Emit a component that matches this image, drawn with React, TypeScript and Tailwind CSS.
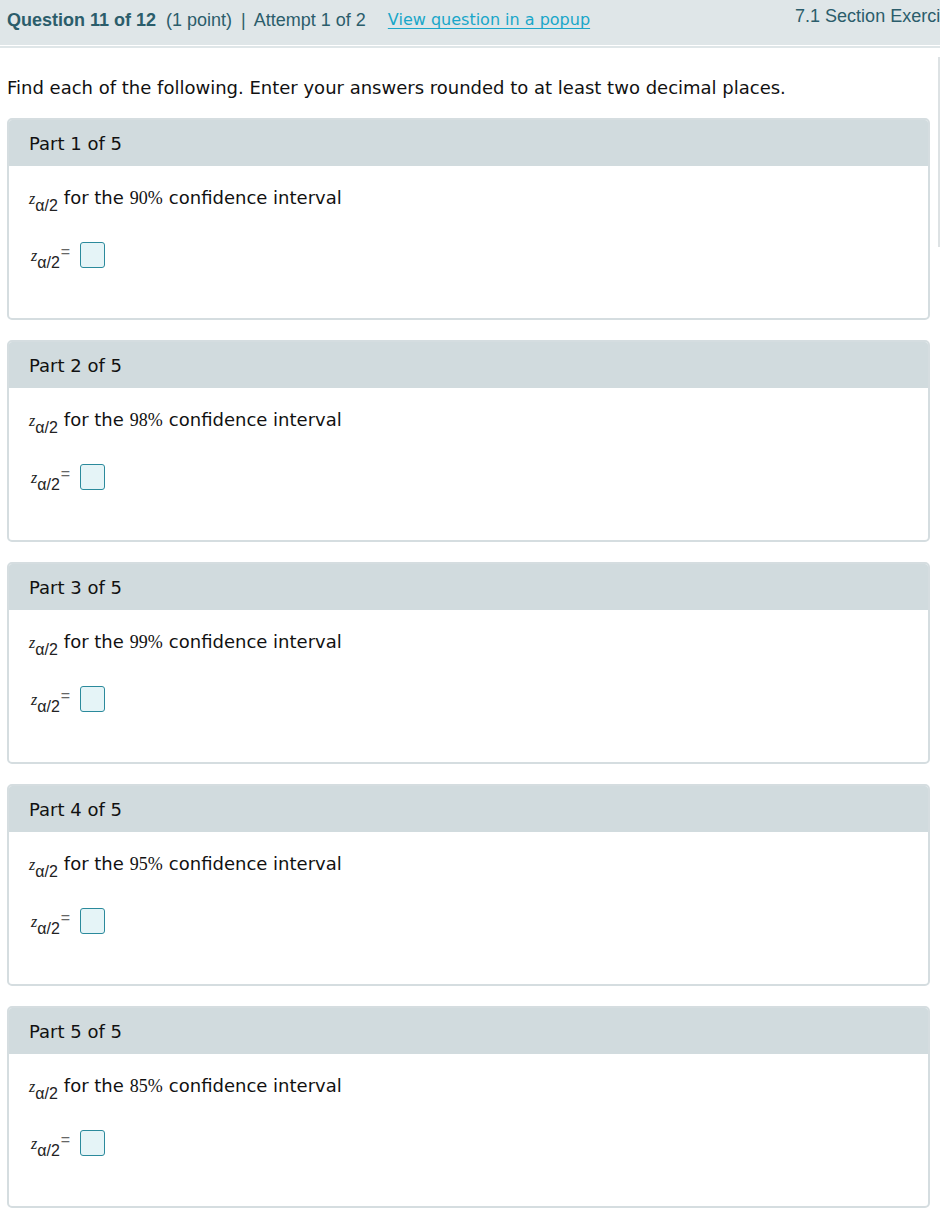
const parts = [
  { n: 1, pct: '90%' },
  { n: 2, pct: '98%' },
  { n: 3, pct: '99%' },
  { n: 4, pct: '95%' },
  { n: 5, pct: '85%' },
];

const ZSub = () => (
  <span className="inline-flex items-baseline">
    <span className="font-['Liberation_Serif',serif] italic text-[16px] text-[#222]">z</span>
    <span className="font-['Liberation_Sans',sans-serif] text-[16px] text-[#222] relative top-[7px]">α/2</span>
  </span>
);

const PartCard = ({ n, pct }: { n: number; pct: string }) => (
  <div className="border-2 border-[#d5dde0] rounded-[5px] h-[202px] overflow-hidden bg-white">
    <div className="bg-[#d1dbde] h-[46px] flex items-center pl-[20px] text-[18px] text-[#111]">
      Part {n} of 5
    </div>
    <div className="pl-[20px] pt-[18px]">
      <div className="flex items-baseline text-[18px] text-[#111]">
        <ZSub />
        <span className="ml-[6px]">for the</span>
        <span className="font-['Liberation_Serif',serif] text-[18px] ml-[6px] mr-[6px]">{pct}</span>
        <span>confidence interval</span>
      </div>
      <div className="flex items-start mt-[30px] pl-[2px]">
        <div className="pt-[2px]">
          <ZSub />
        </div>
        <span className="font-['Liberation_Sans',sans-serif] text-[16px] text-[#666] leading-none ml-[1px] mt-[2px]">=</span>
        <div className="ml-[10px] w-[25px] h-[26px] bg-[#e5f4f7] border border-[#2b8a9c] rounded-[3px]" />
      </div>
    </div>
  </div>
);

export default function App() {
  return (
    <div className="w-[940px] min-h-[1217px] bg-white overflow-hidden relative font-['DejaVu_Sans',Verdana,sans-serif]">
      <div className="bg-[#dfe6e8] h-[45px] flex items-start pt-[7px] pl-[7px] font-['Liberation_Sans',Arial,sans-serif] text-[18px] text-[#2b5d6b] whitespace-nowrap overflow-hidden">
        <span className="font-bold">Question 11 of 12</span>
        <span className="ml-[10px]">(1 point)</span>
        <span className="ml-[9px] mr-[8px]">|</span>
        <span>Attempt 1 of 2</span>
        <span className="ml-[22px] mt-[1px] font-['DejaVu_Sans',Verdana,sans-serif] text-[16px] text-[#19a6c9] underline underline-offset-[3px]">
          View question in a popup
        </span>
        <span className="ml-[205px] -mt-[4px] text-[#2b5d6b] shrink-0">7.1 Section Exercises</span>
      </div>
      <div className="h-[1px] bg-white" />
      <div className="h-[2px] bg-[#dfe6e8]" />

      <div className="absolute right-0 top-[57px] w-[2px] h-[190px] bg-[#dde2e4]" />

      <div className="pl-[7px] pr-[10px]">
        <p className="mt-[28px] text-[18px] text-[#111] leading-[24px]">
          Find each of the following. Enter your answers rounded to at least two decimal places.
        </p>
        <div className="mt-[18px] flex flex-col gap-[20px]">
          {parts.map((p) => (
            <PartCard key={p.n} n={p.n} pct={p.pct} />
          ))}
        </div>
      </div>
    </div>
  );
}
